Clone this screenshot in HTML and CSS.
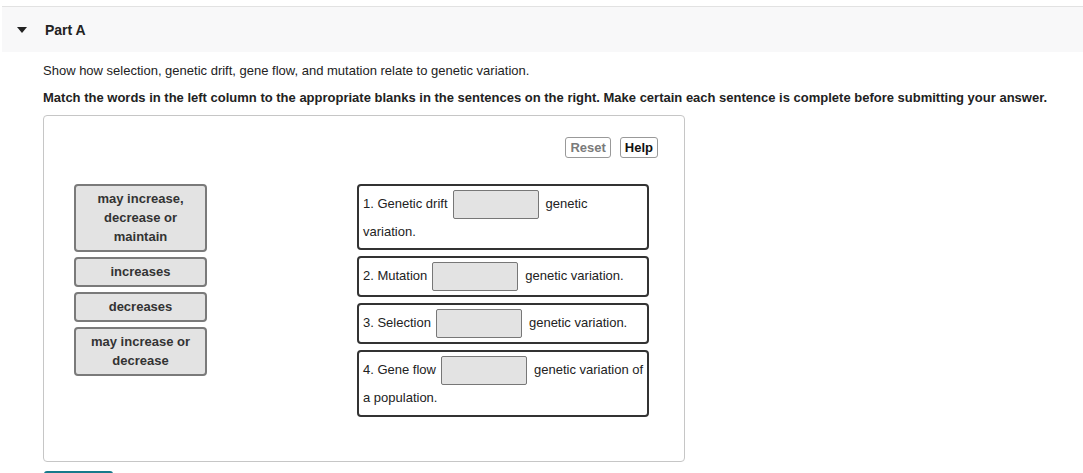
FILE: index.html
```html
<!DOCTYPE html>
<html lang="en">
<head>
    <meta charset="UTF-8">
    <meta name="viewport" content="width=device-width, initial-scale=1.0">
    <title>Part A</title>
    <link rel="stylesheet" href="styles.css">
</head>
<body>
    <!-- Part header -->
    <div class="part-header">
        <span class="caret"></span>
        <h2>Part A</h2>
    </div>

    <div class="part-body">
        <p class="prompt">Show how selection, genetic drift, gene flow, and mutation relate to genetic variation.</p>
        <p class="instructions">Match the words in the left column to the appropriate blanks in the sentences on the right. Make certain each sentence is complete before submitting your answer.</p>

        <div class="answer-box">
            <div class="toolbar">
                <button class="tool-btn reset">Reset</button>
                <button class="tool-btn help">Help</button>
            </div>

            <div class="match-area">
                <!-- Word tiles -->
                <div class="tiles">
                    <div class="tile">may increase,<br>decrease or<br>maintain</div>
                    <div class="tile">increases</div>
                    <div class="tile">decreases</div>
                    <div class="tile">may increase or<br>decrease</div>
                </div>

                <!-- Sentences with blanks -->
                <div class="sentences">
                    <div class="sentence narrow">1. Genetic drift<span class="blank"></span>genetic variation.</div>
                    <div class="sentence">2. Mutation<span class="blank"></span>genetic variation.</div>
                    <div class="sentence">3. Selection<span class="blank"></span>genetic variation.</div>
                    <div class="sentence">4. Gene flow<span class="blank"></span>genetic variation of a population.</div>
                </div>
            </div>
        </div>

        <!-- Submit button, only its top edge is in view -->
        <button class="submit" aria-label="Submit"></button>
    </div>
</body>
</html>
```

FILE: styles.css
```css
body {
    font-family: "Liberation Sans", Arial, sans-serif;
    font-size: 13px;
    color: #222;
    background-color: #fff;
    margin: 0;
    padding: 0;
    overflow: hidden;
}

.part-header {
    display: flex;
    align-items: center;
    height: 45px;
    margin: 6px 0 0 2px;
    border-top: 1px solid #e2e2e2;
    background-color: #f8f8f9;
}

.caret {
    width: 0;
    height: 0;
    margin-left: 15px;
    border-left: 5px solid transparent;
    border-right: 5px solid transparent;
    border-top: 6px solid #222;
}

.part-header h2 {
    margin: 0 0 0 18px;
    font-size: 14px;
    font-weight: bold;
    color: #222;
}

.part-body {
    padding: 0 0 0 43px;
}

.prompt {
    margin: 10px 0 0;
    line-height: 17px;
}

.instructions {
    margin: 10px 0 0;
    font-weight: bold;
    line-height: 17px;
}

.answer-box {
    width: 610px;
    height: 324px;
    margin-top: 9px;
    padding: 21px 26px 0 4px;
    border: 1px solid #c6c6c6;
    border-radius: 4px;
}

.toolbar {
    display: flex;
    justify-content: flex-end;
    gap: 9px;
}

.tool-btn {
    height: 21px;
    padding: 0 4px;
    font-family: inherit;
    font-size: 13px;
    font-weight: bold;
    background-color: #fff;
    border: 1px solid #999;
    border-radius: 3px;
}

.tool-btn.reset {
    color: #7a7a7a;
}

.tool-btn.help {
    color: #111;
}

.match-area {
    display: flex;
    margin-top: 26px;
    padding-left: 26px;
}

.tiles {
    width: 133px;
    display: flex;
    flex-direction: column;
    gap: 5px;
}

.tile {
    padding: 3px 4px 4px;
    background-color: #e3e3e3;
    border: 2px solid #7a7a7a;
    border-radius: 4px;
    font-weight: bold;
    color: #333;
    text-align: center;
    line-height: 19px;
    box-sizing: border-box;
}

.sentences {
    width: 292px;
    margin-left: 150px;
    display: flex;
    flex-direction: column;
    gap: 6px;
}

.sentence {
    padding: 4px 0 4px 4px;
    border: 2px solid #333;
    border-radius: 4px;
    line-height: 26px;
    color: #222;
}

.sentence.narrow {
    padding-right: 8px;
    padding-bottom: 3px;
}

.blank {
    display: inline-block;
    width: 86px;
    height: 29px;
    margin: 0 7px 0 5px;
    vertical-align: middle;
    background-color: #e3e3e3;
    border: 1px solid #777;
    border-radius: 2px;
    box-sizing: border-box;
}

.submit {
    display: block;
    width: 69px;
    height: 30px;
    margin: 9px 0 0 1px;
    background-color: #167a8b;
    border: none;
    border-radius: 3px;
}
```
